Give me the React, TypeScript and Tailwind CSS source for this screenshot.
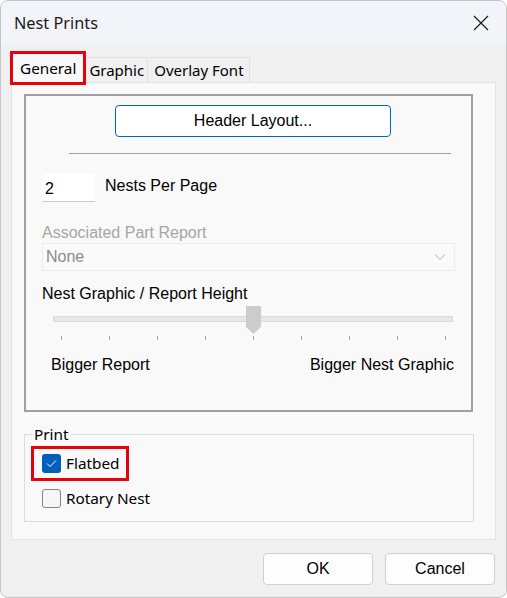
import React from 'react';

const ARIAL = "font-['Liberation_Sans',Arial,sans-serif]";
const SEGOE = "font-['Noto_Sans',sans-serif]";

const TICKS = [0, 1, 2, 3, 4, 5, 6, 7, 8];

export default function App() {
  return (
    <div className="w-[507px] h-[598px] bg-white">
      <div className="w-[507px] h-[598px] rounded-[8px] border border-[#c4c4c4] bg-[#f0f0f0] overflow-hidden flex flex-col">
        {/* Title bar */}
        <div className="h-[44px] bg-[#f3f4f9] flex items-center justify-between pl-[13px] pr-[17px] shrink-0">
          <span className={`${SEGOE} text-[16.3px] text-[#1a1a1a]`}>Nest Prints</span>
          <svg width="16" height="16" viewBox="0 0 16 16" className="text-[#1a1a1a]">
            <path d="M1 1 L15 15 M15 1 L1 15" stroke="currentColor" strokeWidth="1.2" fill="none" />
          </svg>
        </div>

        {/* Tabs */}
        <div className="flex items-end pl-[9px] h-[37px] shrink-0 relative z-10">
          <div className={`${SEGOE} h-[34px] border-[3px] border-[#e8000b] bg-[#f9f9f9] px-[7px] flex items-center text-[15.3px] text-black -mb-[3px]`}>
            General
          </div>
          <div className={`${SEGOE} h-[25px] border-t border-r border-[#e0e0e0] px-[3px] flex items-center text-[15px] text-black`}>
            Graphic
          </div>
          <div className={`${SEGOE} h-[25px] border-t border-r border-[#e0e0e0] px-[5px] flex items-center text-[15px] text-black ml-[1px]`}>
            Overlay Font
          </div>
        </div>

        {/* Tab panel */}
        <div className="mx-[10px] h-[458px] border border-[#e3e3e3] bg-[#f9f9f9] px-[12px] pt-[11px] shrink-0">
          <div className="h-[318px] w-[449px] border-2 border-[#a0a0a0] flex flex-col">
            <button className={`${ARIAL} ml-[89px] mt-[9px] w-[276px] h-[32px] bg-white border border-[#0067c0] rounded-[4px] text-[16px] text-black`}>
              Header Layout...
            </button>
            <div className="ml-[43px] mt-[16px] w-[382px] h-px bg-[#a0a0a0]" />

            <div className="flex items-start ml-[16px] mt-[19px]">
              <div className={`${ARIAL} w-[53px] h-[29px] bg-white border-b border-[#c8c8c8] flex items-center pl-[3px] pt-[4px] text-[16px] text-black`}>
                2
              </div>
              <span className={`${ARIAL} ml-[10px] mt-[1px] text-[16px] text-black`}>Nests Per Page</span>
            </div>

            <span className={`${ARIAL} ml-[16px] mt-[22px] text-[16px] text-[#a6a6a6] leading-[18px]`}>
              Associated Part Report
            </span>
            <div className="ml-[16px] mt-[1px] w-[413px] h-[28px] border border-[#ececec] bg-[#fafafa] flex items-center justify-between pl-[3px] pr-[8px]">
              <span className={`${ARIAL} text-[16px] text-[#8c8c8c]`}>None</span>
              <svg width="12" height="8" viewBox="0 0 12 8">
                <path d="M1 1.5 L6 6.5 L11 1.5" stroke="#b0b0b0" strokeWidth="1" fill="none" />
              </svg>
            </div>

            <span className={`${ARIAL} ml-[16px] mt-[14px] text-[16px] text-black leading-[18px]`}>
              Nest Graphic / Report Height
            </span>

            {/* Slider */}
            <div className="relative ml-[27px] w-[400px] h-[40px]">
              <div className="absolute left-0 right-0 top-[13px] h-[6px] bg-[#e7e7e7] border border-[#dadada]" />
              <svg className="absolute left-[193px] top-[3px]" width="15" height="28" viewBox="0 0 15 28">
                <path d="M0 0 H15 V21 L7.5 28 L0 21 Z" fill="#cccccc" />
              </svg>
              {TICKS.map(i => (
                <div
                  key={i}
                  className="absolute top-[33px] w-px h-[4px] bg-[#a8a8a8]"
                  style={{ left: 8 + i * 48 }}
                />
              ))}
            </div>

            <div className={`${ARIAL} flex justify-between ml-[25px] mr-[17px] mt-[10px] text-[16px] text-black`}>
              <span>Bigger Report</span>
              <span>Bigger Nest Graphic</span>
            </div>
          </div>

          {/* Print group */}
          <div className="relative mt-[22px] w-[450px] h-[88px] border border-[#dcdcdc] pl-[17px] pt-[19px] flex flex-col gap-[16px]">
            <span className={`${SEGOE} absolute left-[7px] -top-[12px] bg-[#f9f9f9] px-[2px] text-[15.3px] text-black leading-[22px]`}>
              Print
            </span>
            <div className="relative flex items-center gap-[5px] h-[19px]">
              <div className="absolute -left-[11px] -top-[8px] w-[98px] h-[35px] border-[3px] border-[#e8000b]" />
              <span className="w-[19px] h-[19px] rounded-[3px] bg-[#005fb8] flex items-center justify-center">
                <svg width="11" height="9" viewBox="0 0 11 9">
                  <path d="M1 4.5 L4 7.5 L10 1.5" stroke="white" strokeWidth="1" fill="none" />
                </svg>
              </span>
              <span className={`${SEGOE} text-[15.3px] text-black`}>Flatbed</span>
            </div>
            <div className="flex items-center gap-[5px] h-[19px]">
              <span className="w-[19px] h-[19px] rounded-[3px] bg-[#f6f6f6] border border-[#858585]" />
              <span className={`${SEGOE} text-[15.3px] text-black`}>Rotary Nest</span>
            </div>
          </div>
        </div>

        {/* Footer */}
        <div className="flex justify-end gap-[12px] pr-[11px] pt-[13px]">
          <button className={`${ARIAL} w-[110px] h-[32px] bg-[#fdfdfd] border border-[#d0d0d0] rounded-[4px] text-[16px] text-black`}>
            OK
          </button>
          <button className={`${ARIAL} w-[110px] h-[32px] bg-[#fdfdfd] border border-[#d0d0d0] rounded-[4px] text-[16px] text-black`}>
            Cancel
          </button>
        </div>
      </div>
    </div>
  );
}
